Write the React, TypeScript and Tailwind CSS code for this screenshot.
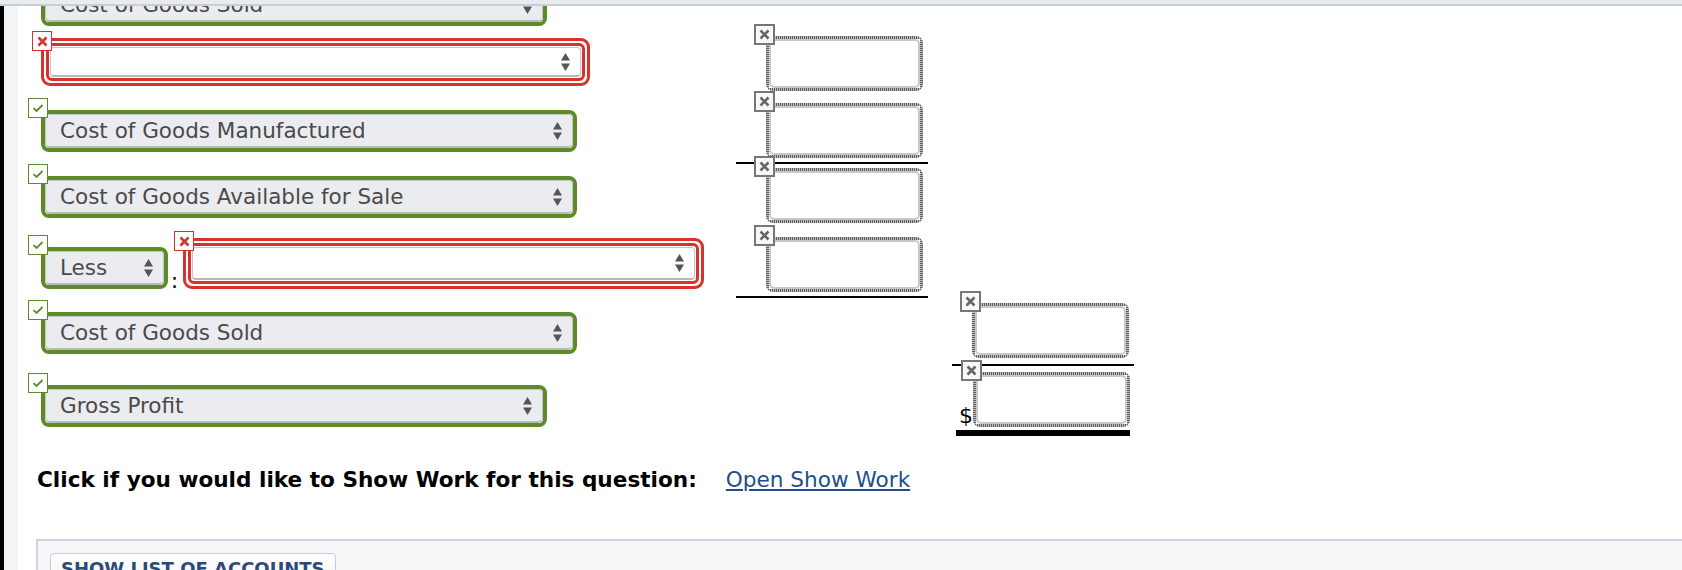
import type { ReactNode } from 'react';

const GREEN = 'border-[#5e8a28]';

function Arrows() {
  return (
    <svg width="11" height="20" viewBox="0 0 11 20" className="shrink-0">
      <path d="M5.5 1 L10 8.5 H1 Z" fill="#555" />
      <path d="M1 11.5 H10 L5.5 19 Z" fill="#555" />
    </svg>
  );
}

function CheckMark() {
  return (
    <div className="absolute -left-[17px] -top-[16px] z-10 flex h-[20px] w-[20px] items-center justify-center border-[1.5px] border-[#5e8a28] bg-white">
      <svg width="12" height="10" viewBox="0 0 12 10">
        <path d="M1.5 5.2 L4.6 8 L10.5 2" stroke="#5e8a28" strokeWidth="1.8" fill="none" />
      </svg>
    </div>
  );
}

function RedX() {
  return (
    <div className="absolute -left-[12px] -top-[10px] z-10 flex h-[20px] w-[20px] items-center justify-center border-[1.5px] border-[#d7322b] bg-white">
      <svg width="11" height="11" viewBox="0 0 11 11">
        <path d="M1.5 1.5 L9.5 9.5 M9.5 1.5 L1.5 9.5" stroke="#d7322b" strokeWidth="2.6" />
      </svg>
    </div>
  );
}

function GrayX() {
  return (
    <div className="absolute -left-[12px] -top-[12px] z-10 flex h-[21px] w-[21px] items-center justify-center border-2 border-[#777] bg-[#f8f8f8]">
      <svg width="11" height="11" viewBox="0 0 11 11">
        <path d="M1.5 1.5 L9.5 9.5 M9.5 1.5 L1.5 9.5" stroke="#666" strokeWidth="2.6" />
      </svg>
    </div>
  );
}

function GreenSelect({ label, className }: { label: string; className: string }) {
  return (
    <div className={`relative rounded-[8px] border-4 ${GREEN} ${className}`}>
      <CheckMark />
      <div className="flex h-[34px] items-center justify-between rounded-[5px] border border-b-2 border-[#c3c5c8] border-b-[#b7b9bc] bg-[#ebecef] pl-[14px] pr-[9px] text-[21.5px] text-[#4a4a4a]">
        <span className="leading-none">{label}</span>
        <Arrows />
      </div>
    </div>
  );
}

function RedSelect({ className, inner }: { className: string; inner: string }) {
  return (
    <div className={`relative rounded-[9px] border-[3px] border-[#d7322b] bg-white p-[2px] ${className}`}>
      <RedX />
      <div className="rounded-[6px] border-[3px] border-[#d7322b] p-[1px]">
        <div className={`flex items-center justify-end rounded-[4px] border border-b-2 border-[#c3c5c8] border-b-[#b7b9bc] bg-white pr-[9px] ${inner}`}>
          <Arrows />
        </div>
      </div>
    </div>
  );
}

function ValueBox() {
  return (
    <div className="relative h-[55px] w-[157px] rounded-[7px] bg-no-repeat p-[3px] [background-image:repeating-linear-gradient(90deg,#5f5f5f_0_1px,#bdbdbd_1px_2px),repeating-linear-gradient(90deg,#5f5f5f_0_1px,#bdbdbd_1px_2px),repeating-linear-gradient(0deg,#5f5f5f_0_1px,#bdbdbd_1px_2px),repeating-linear-gradient(0deg,#5f5f5f_0_1px,#bdbdbd_1px_2px)] [background-position:0_0,0_100%,0_0,100%_0] [background-size:100%_3px,100%_3px,3px_100%,3px_100%]">
      <GrayX />
      <div className="h-full rounded-[5px] border-2 border-[#c8c8c8] bg-white" />
    </div>
  );
}

function Cell({ className, children }: { className: string; children?: ReactNode }) {
  return <div className={`flex ${className}`}>{children}</div>;
}

export default function App() {
  return (
    <div className="flex h-[570px] w-[1682px] flex-col overflow-hidden bg-white font-['DejaVu_Sans',Verdana,sans-serif]">
      <div className="h-[6px] shrink-0 border-b-2 border-[#c7ced7] bg-[#e9ecef]" />
      <div className="flex min-h-0 flex-1">
        <div className="w-[4px] shrink-0 bg-black" />
        <div className="w-[14px] shrink-0 bg-[#f4f5f7]" />
        <div className="min-w-0 flex-1 overflow-hidden">
          <div className="grid grid-cols-[718px_192px_24px_182px] grid-rows-[24px_67px_67px_67px_67px_68px_70px]">
            {/* row 0, cut off by the header */}
            <Cell className="items-end pb-[4px] pl-[23px]">
              <GreenSelect label="Cost of Goods Sold" className="w-[506px] shrink-0" />
            </Cell>
            <Cell className="" />
            <Cell className="" />
            <Cell className="" />

            {/* row 1 */}
            <Cell className="items-start pl-[23px] pt-[8px]">
              <RedSelect className="w-[549px]" inner="h-[30px]" />
            </Cell>
            <Cell className="pl-[30px] pt-[6px]">
              <ValueBox />
            </Cell>
            <Cell className="" />
            <Cell className="" />

            {/* row 2 */}
            <Cell className="items-start pl-[23px] pt-[13px]">
              <GreenSelect label="Cost of Goods Manufactured" className="w-[536px]" />
            </Cell>
            <Cell className="border-b-2 border-black pl-[30px] pt-[6px]">
              <ValueBox />
            </Cell>
            <Cell className="" />
            <Cell className="" />

            {/* row 3 */}
            <Cell className="items-start pl-[23px] pt-[12px]">
              <GreenSelect label="Cost of Goods Available for Sale" className="w-[536px]" />
            </Cell>
            <Cell className="pl-[30px] pt-[4px]">
              <ValueBox />
            </Cell>
            <Cell className="" />
            <Cell className="" />

            {/* row 4 */}
            <Cell className="items-start pl-[23px] pt-[7px]">
              <div className="flex items-end">
                <GreenSelect label="Less" className="w-[127px]" />
                <span className="mx-[3px] mb-[-3px] text-[21px] leading-none text-black">:</span>
                <RedSelect className="ml-[2px] w-[521px]" inner="h-[33px]" />
              </div>
            </Cell>
            <Cell className="border-b-2 border-black pl-[30px] pt-[6px]">
              <ValueBox />
            </Cell>
            <Cell className="" />
            <Cell className="" />

            {/* row 5 */}
            <Cell className="items-start pl-[23px] pt-[14px]">
              <GreenSelect label="Cost of Goods Sold" className="w-[536px]" />
            </Cell>
            <Cell className="" />
            <Cell className="" />
            <Cell className="border-b-2 border-black pl-[20px] pt-[5px]">
              <ValueBox />
            </Cell>

            {/* row 6 */}
            <Cell className="items-start pl-[23px] pt-[19px]">
              <GreenSelect label="Gross Profit" className="w-[506px]" />
            </Cell>
            <Cell className="" />
            <Cell className="" />
            <Cell className="mx-[4px] items-start border-b-[6px] border-black pl-[3px] pt-[6px]">
              <span className="mt-[33px] text-[22px] leading-[22px] text-black">$</span>
              <ValueBox />
            </Cell>
          </div>

          <div className="mt-[31px] flex items-center pl-[19px] text-[21.6px] leading-[26px]">
            <span className="font-bold text-black">Click if you would like to Show Work for this question:</span>
            <a href="#" className="ml-[29px] text-[#1e4f8b] underline">
              Open Show Work
            </a>
          </div>

          <div className="ml-[18px] mt-[46px] h-[60px] border-l-2 border-t-2 border-[#cdd4dd] bg-[#f4f6f8] pl-[12px] pt-[12px]">
            <div className="inline-block h-[40px] rounded-[4px] border border-[#c5ccd5] bg-gradient-to-b from-white to-[#eef0f3] px-[10px] pt-[4px] text-[18px] font-bold leading-[21px] text-[#2c4a78]">
              SHOW LIST OF ACCOUNTS
            </div>
          </div>
        </div>
      </div>
    </div>
  );
}
